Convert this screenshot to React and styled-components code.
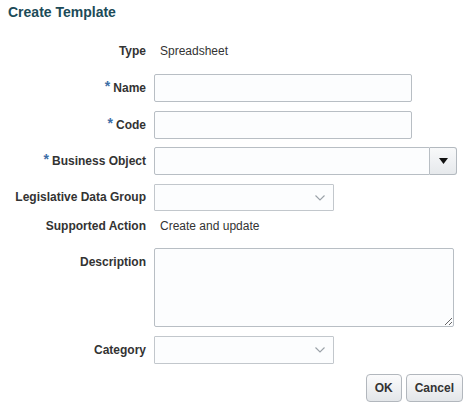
import React from "react";
import styled, { createGlobalStyle } from "styled-components";

const GlobalStyle = createGlobalStyle`
  html, body {
    margin: 0;
    padding: 0;
    background: #ffffff;
  }
  body {
    font-family: "Liberation Sans", Arial, sans-serif;
    color: #333333;
  }
`;

const Page = styled.div`
  width: 474px;
  height: 410px;
  box-sizing: border-box;
  background: #ffffff;
`;

const Title = styled.h1`
  margin: 0;
  padding: 3px 8px 0;
  font-size: 14px;
  line-height: 18px;
  font-weight: 700;
  color: #1c4b58;
`;

const Form = styled.div`
  display: flex;
  flex-direction: column;
  padding-top: 16px;
`;

const Row = styled.div`
  display: flex;
  align-items: ${(p) => (p.$top ? "flex-start" : "center")};
  gap: 8px;
  margin-top: ${(p) => p.$mt || 0}px;
  height: ${(p) => p.$h || 28}px;
`;

const Label = styled.label`
  flex: 0 0 146px;
  height: ${(p) => p.$lh || 28}px;
  text-align: right;
  font-size: 12px;
  font-weight: 700;
  line-height: ${(p) => p.$lh || 28}px;
  color: #333333;
  white-space: nowrap;
`;

const Required = styled.span`
  color: #3d6ea6;
  font-size: 14px;
  line-height: 0;
  margin-right: 3px;
  position: relative;
  top: -1px;
`;

const Value = styled.span`
  padding-left: 6px;
  font-size: 12px;
  color: #333333;
`;

const TextInput = styled.input`
  box-sizing: border-box;
  width: ${(p) => p.$w}px;
  height: 28px;
  border: 1px solid #b8bec4;
  border-radius: 2px;
  background: #fcfdfe;
  outline: none;
  padding: 0 6px;
  font-family: inherit;
  font-size: 12px;
`;

const Combo = styled.div`
  display: flex;
  height: 28px;
`;

const ComboInput = styled(TextInput)`
  border-radius: 2px 0 0 2px;
`;

const ComboButton = styled.button`
  box-sizing: border-box;
  width: 27px;
  height: 28px;
  margin: 0;
  padding: 0;
  display: flex;
  align-items: center;
  justify-content: center;
  border: 1px solid #b3b9bf;
  border-left: none;
  border-radius: 0 3px 3px 0;
  background: linear-gradient(#f8f9fa, #e6e9ec);
`;

const SelectBox = styled.div`
  box-sizing: border-box;
  width: 180px;
  height: ${(p) => p.$h || 28}px;
  display: flex;
  align-items: center;
  justify-content: flex-end;
  padding-right: 8px;
  border: 1px solid #c2c7cc;
  border-radius: 1px;
  background: #fcfdfe;
`;

const TextArea = styled.textarea`
  box-sizing: border-box;
  width: 300px;
  height: 79px;
  margin: 0;
  border: 1px solid #b8bec4;
  border-radius: 2px;
  background: #fcfdfe;
  outline: none;
  resize: both;
  font-family: inherit;
  font-size: 12px;
`;

const Actions = styled.div`
  display: flex;
  justify-content: flex-end;
  gap: 4px;
  margin-top: 10px;
  padding-right: 11px;
`;

const Button = styled.button`
  box-sizing: border-box;
  height: 28px;
  padding: 0 ${(p) => p.$px || 8}px;
  border: 1px solid #b2b7bd;
  border-radius: 4px;
  background: linear-gradient(#fbfbfc, #e3e6e9);
  font-family: "Liberation Sans", Arial, sans-serif;
  font-size: 12px;
  font-weight: 700;
  color: #333333;
`;

const Chevron = () => (
  <svg width="10" height="6" viewBox="0 0 10 6">
    <polyline points="0.5,0.5 5,5 9.5,0.5" fill="none" stroke="#9aa1a8" strokeWidth="1.1" />
  </svg>
);

const Triangle = () => (
  <svg width="9" height="6" viewBox="0 0 9 6">
    <polygon points="0,0 9,0 4.5,6" fill="#111111" />
  </svg>
);

const App = () => {
  return (
    <Page>
      <GlobalStyle />
      <Title>Create Template</Title>
      <Form>
        <Row>
          <Label>Type</Label>
          <Value>Spreadsheet</Value>
        </Row>
        <Row $mt={9}>
          <Label>
            <Required>*</Required>Name
          </Label>
          <TextInput $w={258} />
        </Row>
        <Row $mt={9}>
          <Label>
            <Required>*</Required>Code
          </Label>
          <TextInput $w={258} />
        </Row>
        <Row $mt={8}>
          <Label>
            <Required>*</Required>Business Object
          </Label>
          <Combo>
            <ComboInput $w={276} />
            <ComboButton>
              <Triangle />
            </ComboButton>
          </Combo>
        </Row>
        <Row $mt={9} $h={27}>
          <Label $lh={27}>Legislative Data Group</Label>
          <SelectBox $h={27}>
            <Chevron />
          </SelectBox>
        </Row>
        <Row $mt={6} $h={18}>
          <Label $lh={18}>Supported Action</Label>
          <Value>Create and update</Value>
        </Row>
        <Row $mt={13} $top $h={79}>
          <Label>Description</Label>
          <TextArea />
        </Row>
        <Row $mt={9}>
          <Label>Category</Label>
          <SelectBox>
            <Chevron />
          </SelectBox>
        </Row>
      </Form>
      <Actions>
        <Button $px={8}>OK</Button>
        <Button $px={8}>Cancel</Button>
      </Actions>
    </Page>
  );
};

export default App;
